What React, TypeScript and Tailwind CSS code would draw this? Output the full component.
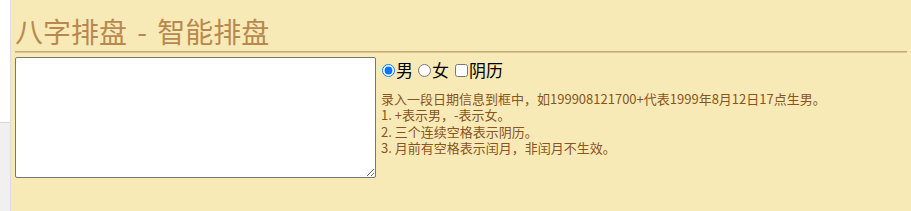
import React from 'react';

const App: React.FC = () => {
  return (
    <div className="flex h-[211px] w-[911px] overflow-hidden bg-white" style={{ fontFamily: '"Microsoft YaHei", "Noto Sans CJK SC", sans-serif' }}>
      <div className="flex w-[11px] flex-col border-r border-[#dcdcdc]">
        <div className="h-[122px] bg-white"></div>
        <div className="flex-1 border-t border-[#d8d8d8] bg-[#f0f0f0]"></div>
      </div>
      <div className="flex-1 bg-[#f8eab7] pl-[4px] pr-[4px]">
        <h1 className="mt-[11px] h-[40px] text-[28px] leading-[40px] text-[#b8894f]">
          八字排盘<span className="mx-[4px]"> - </span>智能排盘
        </h1>
        <div className="h-[2px] border-t border-b border-[#c3ab7a] border-b-[#d9c590]"></div>
        <div className="mt-[4px] flex">
          <textarea className="h-[121px] w-[361px] resize-y rounded-[2px] border border-[#767676] bg-white"></textarea>
          <div className="ml-[5px] flex flex-col">
            <div className="mt-[2px] flex items-center text-[17px] leading-[22px] text-black">
              <input type="radio" name="sex" defaultChecked className="m-0 ml-[1px] mr-[1px] h-[13px] w-[13px] accent-[#0075ff]" />
              <span>男</span>
              <input type="radio" name="sex" className="m-0 ml-[5px] mr-[1px] h-[13px] w-[13px]" />
              <span>女</span>
              <input type="checkbox" className="m-0 ml-[6px] mr-[1px] h-[13px] w-[13px]" />
              <span>阴历</span>
            </div>
            <div className="mt-[10px] text-[13px] leading-[16.4px] text-[#8a5420]">
              <div>录入一段日期信息到框中，如199908121700+代表1999年8月12日17点生男。</div>
              <div>1. +表示男，-表示女。</div>
              <div>2. 三个连续空格表示阴历。</div>
              <div>3. 月前有空格表示闰月，非闰月不生效。</div>
            </div>
          </div>
        </div>
      </div>
    </div>
  );
};

export default App;
